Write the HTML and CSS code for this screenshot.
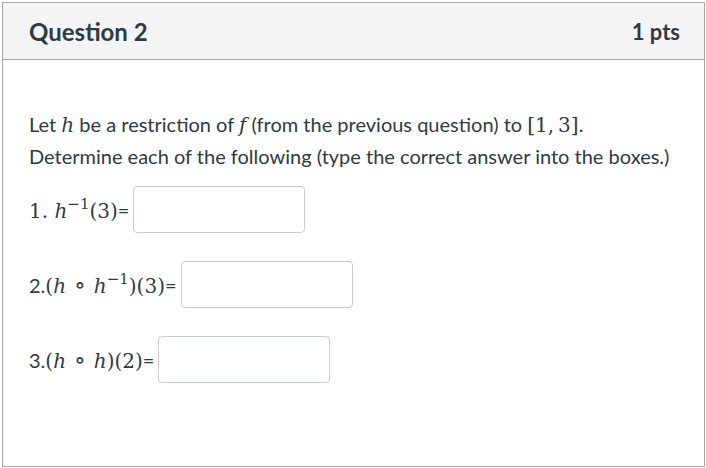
FILE: index.html
```html
<!DOCTYPE html>
<html>
<head>
<meta charset="utf-8">
<link rel="stylesheet" href="styles.css">
</head>
<body>
<div class="card">
  <div class="card-header">
    <span class="title">Question 2</span>
    <span class="pts">1 pts</span>
  </div>
  <div class="card-body">
    <p class="para">Let <span class="m mi">h</span> be a restriction of <span class="m mi">f</span> (from the previous question) to <span class="m">[1,&#8201;3]</span>.<br>Determine each of the following (type the correct answer into the boxes.)</p>
    <div class="row">
      <span class="label"><span class="m">1. <span class="mi">h</span><sup>−1</sup>(3)</span>=</span>
      <span class="box"></span>
    </div>
    <div class="row">
      <span class="label">2.<span class="m">(<span class="mi">h</span><span class="op">∘</span><span class="mi">h</span><sup>−1</sup>)(3)</span>=</span>
      <span class="box"></span>
    </div>
    <div class="row">
      <span class="label">3.<span class="m">(<span class="mi">h</span><span class="op">∘</span><span class="mi">h</span>)(2)</span>=</span>
      <span class="box"></span>
    </div>
  </div>
</div>
</body>
</html>
```
FILE: styles.css
```css
html, body {
  margin: 0;
  padding: 0;
  background: #fff;
}
body {
  font-family: Lato, "Liberation Sans", sans-serif;
  color: #2d3b45;
}
.card {
  margin: 2px;
  width: 701px;
  height: 463px;
  border: 1px solid #a5a5a5;
  box-sizing: content-box;
  display: flex;
  flex-direction: column;
}
.card-header {
  height: 56px;
  background: #f5f5f5;
  border-bottom: 1px solid #a5a5a5;
  display: flex;
  align-items: center;
  justify-content: space-between;
  padding: 0 24px 0 26px;
}
.title {
  font-weight: 700;
  font-size: 24px;
}
.pts {
  font-weight: 700;
  font-size: 22px;
}
.card-body {
  padding: 48px 26px 0 26px;
}
.para {
  margin: 0;
  font-size: 20px;
  line-height: 32px;
}
.m {
  font-family: "DejaVu Serif", "Liberation Serif", serif;
  font-size: 20px;
  line-height: 0;
  color: #2d3b45;
}
.mi {
  font-style: italic;
}
.op {
  font-size: 24px;
  margin: 0 8px;
}
.m sup {
  font-size: 15px;
  vertical-align: 9px;
  line-height: 0;
}
.row {
  display: flex;
  align-items: center;
  font-size: 20px;
  margin-top: 14px;
  height: 47px;
}
.row + .row {
  margin-top: 28px;
}
.label {
  margin-right: 4px;
}
.box {
  display: block;
  width: 170px;
  height: 45px;
  border: 1px solid #c7cdd1;
  border-radius: 4px;
}
```
